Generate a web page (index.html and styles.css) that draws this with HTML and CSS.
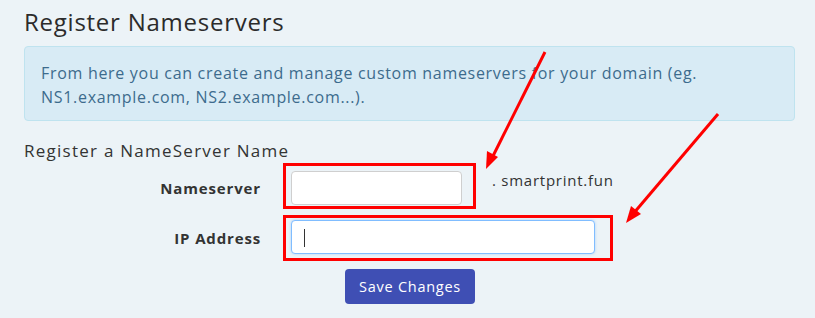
FILE: index.html
```html
<!DOCTYPE html>
<html>
<head>
<meta charset="utf-8">
<link rel="stylesheet" href="styles.css">
</head>
<body>
<div class="page">
  <h1 class="title">Register Nameservers</h1>
  <div class="alert">From here you can create and manage custom nameservers for your domain (eg. NS1.example.com, NS2.example.com...).</div>
  <h2 class="subtitle">Register a NameServer Name</h2>
  <div class="row row-ns">
    <label class="label label-ns">Nameserver</label>
    <div class="mark mark-ns"><input class="input input-ns" type="text"></div>
    <span class="suffix">. smartprint.fun</span>
  </div>
  <div class="row row-ip">
    <label class="label">IP Address</label>
    <div class="mark mark-ip"><div class="input input-ip"><span class="caret"></span></div></div>
  </div>
  <div class="actions"><button class="btn">Save Changes</button></div>
  <svg class="arrows" width="815" height="318" viewBox="0 0 815 318">
    <line x1="545" y1="52" x2="492" y2="158" stroke="#ff0000" stroke-width="3"/>
    <polygon points="486,169 487,151 498,157" fill="#ff0000"/>
    <line x1="718" y1="114" x2="633" y2="214" stroke="#ff0000" stroke-width="3"/>
    <polygon points="626,223 631,206 641,214" fill="#ff0000"/>
  </svg>
</div>
</body>
</html>
```
FILE: styles.css
```css
html, body {
  margin: 0;
  padding: 0;
  background: #ecf3f7;
}
.page {
  position: relative;
  width: 815px;
  height: 318px;
  padding: 0 20px 0 24px;
  box-sizing: border-box;
  font-family: "Open Sans", "Noto Sans", sans-serif;
  color: #333;
}
.title {
  margin: 0;
  padding-top: 7px;
  font-size: 24px;
  font-weight: 400;
  line-height: 30px;
  color: #2b2b2b;
  letter-spacing: 0.75px;
}
.alert {
  margin-top: 9px;
  width: 771px;
  box-sizing: border-box;
  height: 75px;
  padding: 14px 16px;
  background: #d8ebf5;
  border: 1px solid #bfe3ef;
  border-radius: 4px;
  color: #3d6b8d;
  font-size: 16px;
  line-height: 24px;
  letter-spacing: 0.7px;
}
.subtitle {
  margin: 0;
  margin-top: 19px;
  font-size: 17px;
  font-weight: 400;
  line-height: 22px;
  color: #333;
  letter-spacing: 1.25px;
}
.row {
  display: flex;
  align-items: center;
}
.row-ns { margin-top: 1px; }
.row-ip { margin-top: 6px; }
.label {
  width: 237px;
  text-align: right;
  font-weight: 700;
  font-size: 15px;
  color: #333;
  margin-right: 22px;
  letter-spacing: 0.85px;
}
.label-ns {
  margin-top: 4px;
}
.mark {
  border: 3px solid #ff0000;
  box-sizing: border-box;
}
.mark-ns {
  width: 193px;
  height: 46px;
  padding: 5px 11px 1px 5px;
}
.mark-ip {
  width: 330px;
  height: 46px;
  padding: 2px 15px 4px 5px;
}
.input {
  display: block;
  box-sizing: border-box;
  height: 34px;
  background: #fff;
  border-radius: 4px;
  margin: 0;
  font: inherit;
}
.input-ns {
  width: 171px;
  border: 1px solid #cfcfcf;
}
.input-ip {
  width: 304px;
  border: 1px solid #80bdff;
  box-shadow: 0 0 3px rgba(128, 189, 255, 0.6);
  position: relative;
}
.caret {
  position: absolute;
  left: 12px;
  top: 8px;
  width: 1px;
  height: 18px;
  background: #333;
}
.suffix {
  margin-left: 16px;
  margin-top: -12px;
  font-size: 15px;
  color: #333;
  letter-spacing: 0.75px;
}
.actions {
  margin-top: 8px;
  padding-left: 321px;
}
.btn {
  width: 130px;
  height: 35px;
  background: #3f4fb4;
  color: #fff;
  border: none;
  border-radius: 4px;
  font-family: "Open Sans", "Noto Sans", sans-serif;
  font-size: 14.5px;
  letter-spacing: 0.75px;
  padding: 0;
}
.arrows {
  position: absolute;
  left: 0;
  top: 0;
  pointer-events: none;
}
```
